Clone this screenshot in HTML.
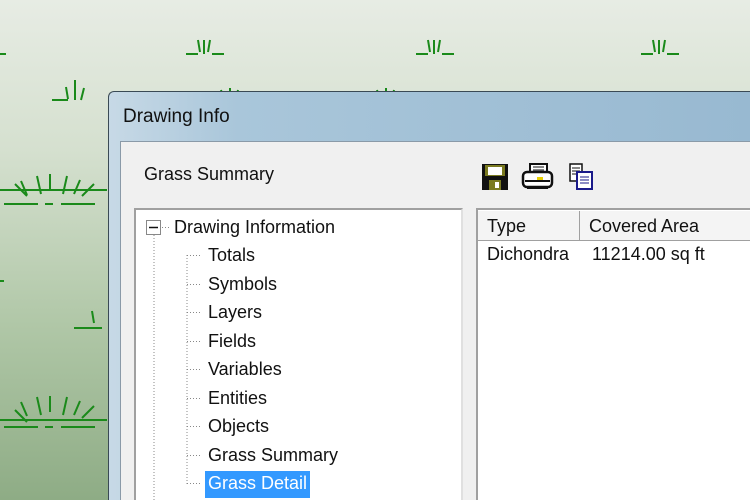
<!DOCTYPE html>
<html style="overflow:hidden"><head><style>
*{margin:0;padding:0;box-sizing:border-box}
html,body{width:750px;height:500px;overflow:hidden}
body{position:relative;background:linear-gradient(#e7ece4 0%,#d5e0cf 30%,#b0c7a7 65%,#8eac85 100%);font-family:"Liberation Sans",sans-serif;}
.g{position:absolute;stroke:#1a8a1a;stroke-width:2;fill:none}
.win{position:absolute;left:108px;top:91px;width:642px;height:409px;overflow:hidden;border:1px solid #3a4a55;border-right:0;border-bottom:0;border-radius:6px 0 0 0;background:linear-gradient(90deg,#c7d9e6 0%,#a9c6da 20%,#98b9d1 100%)}
.title{position:absolute;left:14px;top:14px;font-size:19px;color:#111}
.panel{position:absolute;left:11px;top:49px;width:630px;height:359px;overflow:hidden;background:#f0f0f0;border:1px solid #8a9aa8;border-right:0;border-bottom:0}
.lbl{position:absolute;left:23px;top:22px;font-size:18px;color:#111}
.tree{position:absolute;left:13px;top:66px;width:329px;height:293px;overflow:hidden;background:#fff;border:2px solid;border-bottom:0;border-color:#a0a0a0 #e0e0e0 #e0e0e0 #a0a0a0}
.list{position:absolute;left:355px;top:66px;width:275px;height:293px;overflow:hidden;background:#fff;border:2px solid;border-right:0;border-bottom:0;border-color:#a0a0a0 #e0e0e0 #e0e0e0 #a0a0a0}
.it{position:absolute;font-size:18px;color:#111;white-space:nowrap}
.hd{position:absolute;top:1px;height:30px;background:#f4f4f4;border-right:1px solid #a0a0a0;border-bottom:1px solid #a0a0a0;font-size:18px;padding:5px 0 0 9px;color:#111;white-space:nowrap}
</style></head><body>
<svg class="g" width="750" height="500" style="left:0;top:0;position:absolute">
<path d="M186 54h12M200 52l-2-12M204 54v-14M208 52l2-12M212 54h12"/>
<path d="M416 54h12M430 52l-2-12M434 54v-14M438 52l2-12M442 54h12"/>
<path d="M641 54h12M655 52l-2-12M659 54v-14M663 52l2-12M667 54h12"/>
<path d="M0 54h6"/>
<path d="M52 100h16M68 99l-2-12M75 100v-20M81 100l3-12"/>
<path d="M224 100l-3-10M230 100v-12M236 100l2-10M380 100l-3-10M386 100v-12M392 100l2-10"/>
<path d="M0 190h107M4 204h34M45 204h8M61 204h34M15 184l12 12M21 181l6 14M37 176l4 18M50 174v16M67 176l-4 18M80 180l-6 14M94 184l-12 12"/>
<path d="M74 328h28M94 323l-2-12"/>
<path d="M0 281h4"/>
<path d="M0 420h107M4 427h34M45 427h8M61 427h34M15 410l12 12M21 402l6 14M37 397l4 18M50 396v16M67 397l-4 18M80 401l-6 14M94 406l-12 12"/>
</svg>
<div class="win">
<div class="title">Drawing Info</div>
<div class="panel">
<div class="lbl">Grass Summary</div>
<svg style="position:absolute;left:360px;top:20px" width="130" height="32">
<rect x="1" y="2" width="26" height="26" fill="#111"/><rect x="4" y="3" width="20" height="11" fill="#7a7a20"/><rect x="7" y="5" width="14" height="8" fill="#fff"/><rect x="8" y="18" width="12" height="10" fill="#7a7a20"/><rect x="14" y="20" width="4" height="6" fill="#fff"/>
<rect x="49" y="2" width="17" height="9" fill="#fff" stroke="#111" stroke-width="2"/><path d="M52 5h11M52 8h11" stroke="#111"/><rect x="42" y="10" width="29" height="15" rx="4" fill="#fff" stroke="#111" stroke-width="2.5"/><rect x="44" y="18" width="25" height="2" fill="#111"/><rect x="56" y="15" width="6" height="3" fill="#e8d000"/><rect x="46" y="24" width="21" height="3" fill="#111"/>
<rect x="89" y="2" width="12" height="17" fill="#fff" stroke="#111" stroke-width="1.5"/><path d="M91 6h8M91 9h8M91 12h8" stroke="#111"/><rect x="96" y="10" width="15" height="17" fill="#fff" stroke="#1a1a8a" stroke-width="2"/><path d="M99 15h9M99 18h9M99 21h9" stroke="#1a1a8a"/>
</svg>
<div class="tree">
<svg style="position:absolute;left:0;top:0" width="325" height="291">
<rect x="10.5" y="10.5" width="14" height="14" fill="#fff" stroke="#888"/><path d="M13 17.5h9" stroke="#111" stroke-width="1.5"/>
<path d="M26 17.5h8M18 25v266M51 45v229" stroke="#888" stroke-dasharray="1 2"/>
<path d="M51 45.5h14M51 74.5h14M51 102.5h14M51 131.5h14M51 159.5h14M51 188.5h14M51 216.5h14M51 245.5h14M51 273.5h14" stroke="#888" stroke-dasharray="1 2"/>
</svg>
<div class="it" style="left:38px;top:7px">Drawing Information</div>
<div class="it" style="left:72px;top:35px">Totals</div>
<div class="it" style="left:72px;top:64px">Symbols</div>
<div class="it" style="left:72px;top:92px">Layers</div>
<div class="it" style="left:72px;top:121px">Fields</div>
<div class="it" style="left:72px;top:149px">Variables</div>
<div class="it" style="left:72px;top:178px">Entities</div>
<div class="it" style="left:72px;top:206px">Objects</div>
<div class="it" style="left:72px;top:235px">Grass Summary</div>
<div class="it" style="left:69px;top:261px;background:#3399ff;color:#fff;padding:2px 3px;height:27px">Grass Detail</div>
</div>
<div class="list">
<div class="hd" style="left:0;width:102px">Type</div>
<div class="hd" style="left:102px;width:171px">Covered Area</div>
<div class="it" style="left:9px;top:34px">Dichondra</div>
<div class="it" style="left:114px;top:34px">11214.00 sq ft</div>
</div>
</div>
</div>
</body></html>
